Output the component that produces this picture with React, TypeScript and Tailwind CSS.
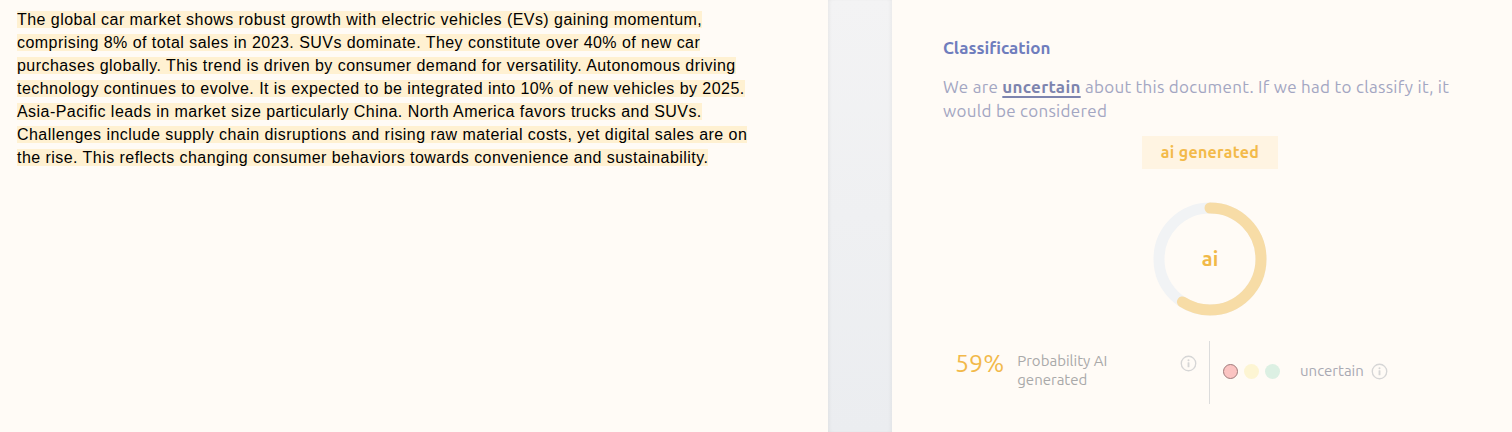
import React from 'react';

const SENTENCES = [
  'The global car market shows robust growth with electric vehicles (EVs) gaining momentum, comprising 8% of total sales in 2023.',
  'SUVs dominate.',
  'They constitute over 40% of new car purchases globally.',
  'This trend is driven by consumer demand for versatility.',
  'Autonomous driving technology continues to evolve.',
  'It is expected to be integrated into 10% of new vehicles by 2025.',
  'Asia-Pacific leads in market size particularly China.',
  'North America favors trucks and SUVs.',
  'Challenges include supply chain disruptions and rising raw material costs, yet digital sales are on the rise.',
  'This reflects changing consumer behaviors towards convenience and sustainability.',
];

const UI_FONT = "font-['Ubuntu','Open_Sans',sans-serif]";

function InfoIcon() {
  return (
    <svg width="17" height="17" viewBox="0 0 20 20" className="shrink-0">
      <circle cx="10" cy="10" r="8.5" fill="none" stroke="#d6d6d6" strokeWidth="1.6" />
      <circle cx="10" cy="6.2" r="1.2" fill="#d6d6d6" />
      <rect x="8.9" y="8.5" width="2.2" height="6" rx="0.6" fill="#d6d6d6" />
    </svg>
  );
}

function Donut({ value }: { value: number }) {
  const r = 51;
  const c = 2 * Math.PI * r;
  return (
    <div className="relative w-[114px] h-[114px]">
      <svg width="114" height="114" viewBox="0 0 114 114" className="-rotate-90">
        <circle cx="57" cy="57" r={r} fill="none" stroke="#f1f3f5" strokeWidth="11" />
        <circle
          cx="57"
          cy="57"
          r={r}
          fill="none"
          stroke="#f7dca6"
          strokeWidth="11"
          strokeLinecap="round"
          strokeDasharray={`${c * value} ${c}`}
        />
      </svg>
      <span className="absolute inset-0 flex items-center justify-center text-[20px] font-bold text-[#f1b948]">
        ai
      </span>
    </div>
  );
}

export default function App() {
  return (
    <div className="flex h-[432px] w-[1512px] bg-[#fffbf6] overflow-hidden">
      {/* document text */}
      <div className="w-[828px] shrink-0 pl-[17px] pr-[66px] pt-[8px] font-['Liberation_Sans',Arial,sans-serif] text-[16px] tracking-[0.45px] leading-[23px] text-black">
        <p>
          {SENTENCES.map((s, i) => (
            <React.Fragment key={i}>
              <span className="bg-[#fff1d2]">{s} </span>
            </React.Fragment>
          ))}
        </p>
      </div>

      {/* gutter */}
      <div className="w-[64px] shrink-0 bg-gradient-to-b from-[#f3f3f4] to-[#ebedf0] shadow-[inset_3px_0_4px_-2px_rgba(0,0,0,0.06),inset_-3px_0_4px_-2px_rgba(0,0,0,0.05)]" />

      {/* classification panel */}
      <div className={`flex-1 pl-[51px] pr-[35px] pt-[36px] ${UI_FONT}`}>
        <h3 className="text-[17px] font-bold text-[#6f7dbd] leading-[24px]">Classification</h3>
        <p className="mt-[15px] text-[17px] tracking-[0.3px] leading-[24px] text-[#a3a6c2]">
          We are{' '}
          <span className="font-bold text-[#7d84ae] underline underline-offset-[3px] decoration-[1.5px]">
            uncertain
          </span>{' '}
          about this document. If we had to classify it, it would be considered
        </p>
        <div className="flex justify-center mt-[13px]">
          <span className="px-[19px] py-[6px] bg-[#fff4e2] text-[#f3ba4a] text-[16px] tracking-[0.3px] font-bold leading-[21px]">
            ai generated
          </span>
        </div>
        <div className="flex justify-center mt-[33px]">
          <Donut value={0.59} />
        </div>
        <div className="flex mt-[25px]">
          <div className="flex w-[267px] items-start pl-[12px] pr-[12px] pt-[10px] border-r border-[#dcdcdc] h-[63px]">
            <span className="text-[25px] leading-[40px] text-[#f2b94a] mt-[-8px]">59%</span>
            <span className="ml-[13px] text-[15px] leading-[19px] text-[#a9a9a9] w-[130px]">
              Probability AI generated
            </span>
            <span className="ml-auto mt-[4px]">
              <InfoIcon />
            </span>
          </div>
          <div className="flex items-center gap-[6px] pl-[13px] h-[63px] pb-[2px]">
            <span className="w-[15px] h-[15px] rounded-full bg-[#fbc4c2] border border-[#a07b7b]" />
            <span className="w-[15px] h-[15px] rounded-full bg-[#fdf5d3]" />
            <span className="w-[15px] h-[15px] rounded-full bg-[#dcf0e3]" />
            <span className="ml-[14px] text-[15px] text-[#a9a9b3]">uncertain</span>
            <span className="ml-[1px]">
              <InfoIcon />
            </span>
          </div>
        </div>
      </div>
    </div>
  );
}
